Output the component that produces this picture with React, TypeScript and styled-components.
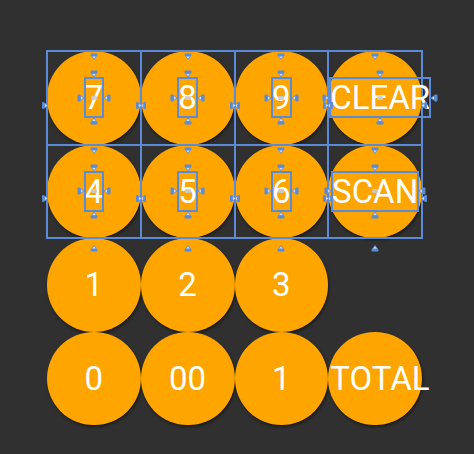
import React from "react";
import styled, { createGlobalStyle, css } from "styled-components";

const Global = createGlobalStyle`
  html, body { margin: 0; padding: 0; background: #303030; }
  body { font-family: Roboto, "Noto Sans", sans-serif; width: 474px; height: 454px; overflow: hidden; }
`;

const BLUE = "#5b8ad6";

const Page = styled.div`
  padding: 51px 0 0 47px;
`;

const Keypad = styled.div`
  display: grid;
  grid-template-columns: repeat(4, 93.75px);
  grid-auto-rows: 93.5px;
`;

const Cell = styled.div<{ $selected?: boolean }>`
  position: relative;
  display: flex;
  ${(p) =>
    p.$selected &&
    css`
      &::after {
        content: "";
        position: absolute;
        inset: -1px;
        border: 2px solid ${BLUE};
        pointer-events: none;
        z-index: 2;
      }
    `}
`;

const Key = styled.div`
  width: 100%;
  height: 100%;
  border-radius: 50%;
  background: #ffa500;
  box-shadow: 1px 2px 3px rgba(0, 0, 0, 0.45);
  display: flex;
  align-items: center;
  justify-content: safe center;
  padding: 0 2px;
  box-sizing: border-box;
  overflow: visible;
`;

const Label = styled.span<{ $selected?: boolean }>`
  position: relative;
  flex: none;
  color: #ffffff;
  font-size: 33px;
  line-height: 39px;
  white-space: nowrap;
  ${(p) =>
    p.$selected &&
    css`
      outline: 2px solid ${BLUE};
      outline-offset: -1px;
      z-index: 3;
    `}
`;

const Handle = styled.svg<{ $pos: "top" | "bottom" | "left" | "right" }>`
  position: absolute;
  z-index: 4;
  width: 8px;
  height: 8px;
  ${(p) =>
    p.$pos === "top" &&
    css`
      top: -8px;
      left: calc(50% - 4px);
    `}
  ${(p) =>
    p.$pos === "bottom" &&
    css`
      bottom: -8px;
      left: calc(50% - 4px);
      transform: rotate(180deg);
    `}
  ${(p) =>
    p.$pos === "left" &&
    css`
      left: -8px;
      top: calc(50% - 4px);
      transform: rotate(-90deg);
    `}
  ${(p) =>
    p.$pos === "right" &&
    css`
      right: -8px;
      top: calc(50% - 4px);
      transform: rotate(90deg);
    `}
`;

const CenterDot = styled.span`
  position: absolute;
  left: calc(50% - 3px);
  top: calc(50% - 2px);
  width: 6px;
  height: 4px;
  border-radius: 1px;
  background: rgba(200, 205, 215, 0.85);
`;

const Arrow: React.FC<{ pos: "top" | "bottom" | "left" | "right" }> = ({ pos }) => (
  <Handle $pos={pos} viewBox="0 0 8 8">
    <rect x="0.5" y="0.5" width="7" height="3" rx="1" fill={BLUE} />
    <path d="M1.5 3.5 L6.5 3.5 L4 7 Z" fill="#c8d8f4" stroke={BLUE} strokeWidth="0.8" />
  </Handle>
);

const CellHandle = styled.span<{ $pos: "top" | "left" | "right" | "bottom" }>`
  position: absolute;
  z-index: 5;
  width: 8px;
  height: 7px;
  ${(p) =>
    p.$pos === "top" &&
    css`
      top: -6px;
      left: calc(50% - 4px);
    `}
  ${(p) =>
    p.$pos === "bottom" &&
    css`
      bottom: -6px;
      left: calc(50% - 4px);
    `}
  ${(p) =>
    p.$pos === "left" &&
    css`
      left: -6px;
      top: calc(50% - 4px);
    `}
  ${(p) =>
    p.$pos === "right" &&
    css`
      right: -6px;
      top: calc(50% - 4px);
    `}
`;

const CellMark: React.FC<{ pos: "top" | "left" | "right" | "bottom" }> = ({ pos }) => {
  const rot = { top: 0, bottom: 180, left: -90, right: 90 }[pos];
  return (
    <CellHandle $pos={pos}>
      <svg width="8" height="7" viewBox="0 0 8 7" style={{ transform: `rotate(${rot}deg)` }}>
        <rect x="0.5" y="0.5" width="7" height="2.5" rx="1" fill={BLUE} />
        <path d="M1.5 3 L6.5 3 L4 6.5 Z" fill="#c8d8f4" stroke={BLUE} strokeWidth="0.8" />
      </svg>
    </CellHandle>
  );
};

type KeyDef = { label: string; selected?: boolean } | null;

const rows: KeyDef[][] = [
  [
    { label: "7", selected: true },
    { label: "8", selected: true },
    { label: "9", selected: true },
    { label: "CLEAR", selected: true },
  ],
  [
    { label: "4", selected: true },
    { label: "5", selected: true },
    { label: "6", selected: true },
    { label: "SCAN", selected: true },
  ],
  [{ label: "1" }, { label: "2" }, { label: "3" }, null],
  [{ label: "0" }, { label: "00" }, { label: "1" }, { label: "TOTAL" }],
];

export default function App() {
  return (
    <>
      <Global />
      <Page>
        <Keypad>
          {rows.flatMap((row, r) =>
            row.map((k, c) => (
              <Cell key={`${r}-${c}`} $selected={!!k?.selected}>
                {k && (
                  <Key>
                    <Label $selected={k.selected}>
                      {k.label}
                      {k.selected && (
                        <>
                          <CenterDot />
                          <Arrow pos="top" />
                          <Arrow pos="bottom" />
                          <Arrow pos="left" />
                          <Arrow pos="right" />
                        </>
                      )}
                    </Label>
                  </Key>
                )}
                {k?.selected && (
                  <>
                    <CellMark pos="top" />
                    <CellMark pos="left" />
                    <CellMark pos="right" />
                    {r === 1 && <CellMark pos="bottom" />}
                  </>
                )}
              </Cell>
            ))
          )}
        </Keypad>
      </Page>
    </>
  );
}
